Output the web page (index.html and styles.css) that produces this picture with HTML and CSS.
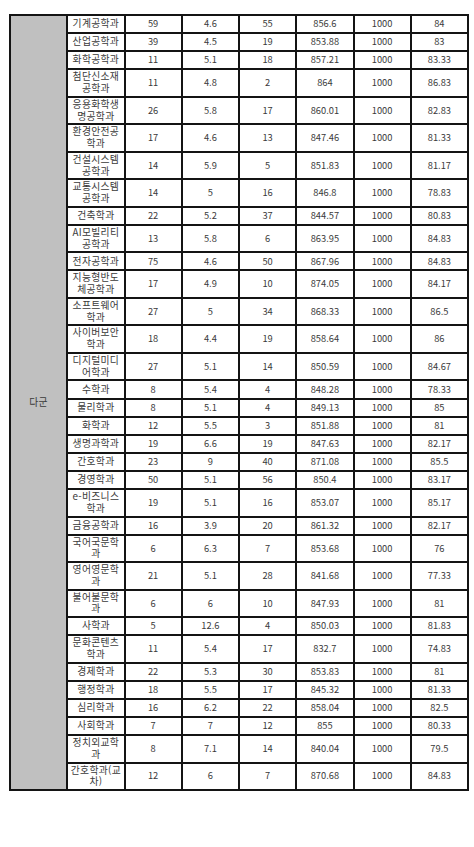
FILE: index.html
```html
<!DOCTYPE html>
<html lang="ko">
<head>
<meta charset="utf-8">
<title>다군 모집 결과</title>
<link rel="stylesheet" href="styles.css">
</head>
<body>
<div class="sheet">
  <div class="group">다군</div>
  <div class="c n">기계공학과</div><div class="c">59</div><div class="c">4.6</div><div class="c">55</div><div class="c">856.6</div><div class="c">1000</div><div class="c">84</div>
  <div class="c n">산업공학과</div><div class="c">39</div><div class="c">4.5</div><div class="c">19</div><div class="c">853.88</div><div class="c">1000</div><div class="c">83</div>
  <div class="c n">화학공학과</div><div class="c">11</div><div class="c">5.1</div><div class="c">18</div><div class="c">857.21</div><div class="c">1000</div><div class="c">83.33</div>
  <div class="c n">첨단신소재공학과</div><div class="c">11</div><div class="c">4.8</div><div class="c">2</div><div class="c">864</div><div class="c">1000</div><div class="c">86.83</div>
  <div class="c n">응용화학생명공학과</div><div class="c">26</div><div class="c">5.8</div><div class="c">17</div><div class="c">860.01</div><div class="c">1000</div><div class="c">82.83</div>
  <div class="c n">환경안전공학과</div><div class="c">17</div><div class="c">4.6</div><div class="c">13</div><div class="c">847.46</div><div class="c">1000</div><div class="c">81.33</div>
  <div class="c n">건설시스템공학과</div><div class="c">14</div><div class="c">5.9</div><div class="c">5</div><div class="c">851.83</div><div class="c">1000</div><div class="c">81.17</div>
  <div class="c n">교통시스템공학과</div><div class="c">14</div><div class="c">5</div><div class="c">16</div><div class="c">846.8</div><div class="c">1000</div><div class="c">78.83</div>
  <div class="c n">건축학과</div><div class="c">22</div><div class="c">5.2</div><div class="c">37</div><div class="c">844.57</div><div class="c">1000</div><div class="c">80.83</div>
  <div class="c n">AI모빌리티공학과</div><div class="c">13</div><div class="c">5.8</div><div class="c">6</div><div class="c">863.95</div><div class="c">1000</div><div class="c">84.83</div>
  <div class="c n">전자공학과</div><div class="c">75</div><div class="c">4.6</div><div class="c">50</div><div class="c">867.96</div><div class="c">1000</div><div class="c">84.83</div>
  <div class="c n">지능형반도체공학과</div><div class="c">17</div><div class="c">4.9</div><div class="c">10</div><div class="c">874.05</div><div class="c">1000</div><div class="c">84.17</div>
  <div class="c n">소프트웨어학과</div><div class="c">27</div><div class="c">5</div><div class="c">34</div><div class="c">868.33</div><div class="c">1000</div><div class="c">86.5</div>
  <div class="c n">사이버보안학과</div><div class="c">18</div><div class="c">4.4</div><div class="c">19</div><div class="c">858.64</div><div class="c">1000</div><div class="c">86</div>
  <div class="c n">디지털미디어학과</div><div class="c">27</div><div class="c">5.1</div><div class="c">14</div><div class="c">850.59</div><div class="c">1000</div><div class="c">84.67</div>
  <div class="c n">수학과</div><div class="c">8</div><div class="c">5.4</div><div class="c">4</div><div class="c">848.28</div><div class="c">1000</div><div class="c">78.33</div>
  <div class="c n">물리학과</div><div class="c">8</div><div class="c">5.1</div><div class="c">4</div><div class="c">849.13</div><div class="c">1000</div><div class="c">85</div>
  <div class="c n">화학과</div><div class="c">12</div><div class="c">5.5</div><div class="c">3</div><div class="c">851.88</div><div class="c">1000</div><div class="c">81</div>
  <div class="c n">생명과학과</div><div class="c">19</div><div class="c">6.6</div><div class="c">19</div><div class="c">847.63</div><div class="c">1000</div><div class="c">82.17</div>
  <div class="c n">간호학과</div><div class="c">23</div><div class="c">9</div><div class="c">40</div><div class="c">871.08</div><div class="c">1000</div><div class="c">85.5</div>
  <div class="c n">경영학과</div><div class="c">50</div><div class="c">5.1</div><div class="c">56</div><div class="c">850.4</div><div class="c">1000</div><div class="c">83.17</div>
  <div class="c n">e-비즈니스학과</div><div class="c">19</div><div class="c">5.1</div><div class="c">16</div><div class="c">853.07</div><div class="c">1000</div><div class="c">85.17</div>
  <div class="c n">금융공학과</div><div class="c">16</div><div class="c">3.9</div><div class="c">20</div><div class="c">861.32</div><div class="c">1000</div><div class="c">82.17</div>
  <div class="c n">국어국문학과</div><div class="c">6</div><div class="c">6.3</div><div class="c">7</div><div class="c">853.68</div><div class="c">1000</div><div class="c">76</div>
  <div class="c n">영어영문학과</div><div class="c">21</div><div class="c">5.1</div><div class="c">28</div><div class="c">841.68</div><div class="c">1000</div><div class="c">77.33</div>
  <div class="c n">불어불문학과</div><div class="c">6</div><div class="c">6</div><div class="c">10</div><div class="c">847.93</div><div class="c">1000</div><div class="c">81</div>
  <div class="c n">사학과</div><div class="c">5</div><div class="c">12.6</div><div class="c">4</div><div class="c">850.03</div><div class="c">1000</div><div class="c">81.83</div>
  <div class="c n">문화콘텐츠학과</div><div class="c">11</div><div class="c">5.4</div><div class="c">17</div><div class="c">832.7</div><div class="c">1000</div><div class="c">74.83</div>
  <div class="c n">경제학과</div><div class="c">22</div><div class="c">5.3</div><div class="c">30</div><div class="c">853.83</div><div class="c">1000</div><div class="c">81</div>
  <div class="c n">행정학과</div><div class="c">18</div><div class="c">5.5</div><div class="c">17</div><div class="c">845.32</div><div class="c">1000</div><div class="c">81.33</div>
  <div class="c n">심리학과</div><div class="c">16</div><div class="c">6.2</div><div class="c">22</div><div class="c">858.04</div><div class="c">1000</div><div class="c">82.5</div>
  <div class="c n">사회학과</div><div class="c">7</div><div class="c">7</div><div class="c">12</div><div class="c">855</div><div class="c">1000</div><div class="c">80.33</div>
  <div class="c n">정치외교학과</div><div class="c">8</div><div class="c">7.1</div><div class="c">14</div><div class="c">840.04</div><div class="c">1000</div><div class="c">79.5</div>
  <div class="c n">간호학과(교차)</div><div class="c">12</div><div class="c">6</div><div class="c">7</div><div class="c">870.68</div><div class="c">1000</div><div class="c">84.83</div>
</div>
</body>
</html>
```

FILE: styles.css
```css
html, body {
  margin: 0;
  padding: 0;
  background: #fff;
}

body {
  font-family: "Noto Sans CJK KR", "Noto Sans", sans-serif;
  font-size: 9.3px;
  color: #3a3a3a;
}

.sheet {
  box-sizing: border-box;
  width: 460px;
  margin: 14px 0 0 9px;
  padding: 2px;
  display: grid;
  grid-template-columns: repeat(8, minmax(0, 1fr));
  grid-auto-rows: minmax(16.1px, auto);
  gap: 2px;
  background: #141414;
}

.group {
  grid-column: 1;
  grid-row: 1 / span 34;
  background: #c0c0c0;
  display: flex;
  align-items: center;
  justify-content: center;
  font-size: 9.8px;
  letter-spacing: 0.3px;
  line-height: 11.75px;
}

.c {
  background: #fff;
  display: flex;
  align-items: center;
  justify-content: center;
  text-align: center;
  padding: 1px 2px;
  line-height: 11.75px;
}

.n {
  padding: 1px 1.4px;
  font-size: 9.8px;
  letter-spacing: 0.3px;
}
```
